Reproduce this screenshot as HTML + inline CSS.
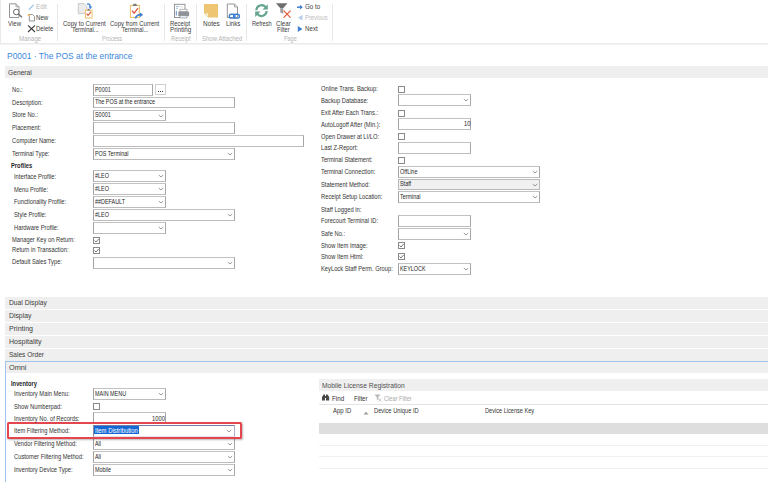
<!DOCTYPE html><html><head><meta charset="utf-8"><style>
html,body{margin:0;padding:0;background:#fff;width:768px;height:482px;overflow:hidden;position:relative}
#wrap{position:absolute;left:0;top:0;width:768px;height:482px;}
.t{position:absolute;white-space:nowrap;line-height:1;transform-origin:0 0;font-family:'Liberation Sans', sans-serif}
</style></head><body><div id="wrap">
<div style="position:absolute;left:0px;top:0px;width:1px;height:44px;background:#eaeaea"></div>
<div style="position:absolute;left:0px;top:43px;width:768px;height:1px;background:#eaeaea"></div>
<div style="position:absolute;left:0px;top:44px;width:768px;height:1px;background:#f4f4f4"></div>
<div style="position:absolute;left:57px;top:4px;width:1px;height:37px;background:#e8e8e8"></div>
<div style="position:absolute;left:164px;top:4px;width:1px;height:37px;background:#e8e8e8"></div>
<div style="position:absolute;left:196px;top:4px;width:1px;height:37px;background:#e8e8e8"></div>
<div style="position:absolute;left:246px;top:4px;width:1px;height:37px;background:#e8e8e8"></div>
<div style="position:absolute;left:332px;top:4px;width:1px;height:37px;background:#e8e8e8"></div>
<div style="position:absolute;left:5px;top:66px;width:763px;height:12px;background:#efefef"></div>
<div style="position:absolute;left:93px;top:84px;width:60px;height:12px;box-sizing:border-box;border:1px solid;border-color:#c2c2c2 #a6a6a6 #bcbcbc #a2a2a2;background:#fff"></div>
<div style="position:absolute;left:155px;top:84px;width:11px;height:11px;box-sizing:border-box;border:1px solid #cfcfcf;background:#fff"></div>
<div style="position:absolute;left:157.6px;top:91px;width:1.2px;height:1.3px;background:#333"></div>
<div style="position:absolute;left:159.8px;top:91px;width:1.2px;height:1.3px;background:#333"></div>
<div style="position:absolute;left:162.0px;top:91px;width:1.2px;height:1.3px;background:#333"></div>
<div style="position:absolute;left:93px;top:97px;width:142px;height:11px;box-sizing:border-box;border:1px solid;border-color:#c2c2c2 #a6a6a6 #bcbcbc #a2a2a2;background:#fff"></div>
<div style="position:absolute;left:93px;top:110px;width:73px;height:11px;box-sizing:border-box;border:1px solid;border-color:#c2c2c2 #a6a6a6 #bcbcbc #a2a2a2;background:#fff"></div>
<svg style="position:absolute;left:158px;top:113.5px" width="6" height="4" viewBox="0 0 6 4"><path d="M0.8 1 L3 3 L5.2 1" fill="none" stroke="#7a7a7a" stroke-width="0.75"/></svg>
<div style="position:absolute;left:93px;top:122px;width:142px;height:12px;box-sizing:border-box;border:1px solid;border-color:#c2c2c2 #a6a6a6 #bcbcbc #a2a2a2;background:#fff"></div>
<div style="position:absolute;left:93px;top:135px;width:211px;height:12px;box-sizing:border-box;border:1px solid;border-color:#c2c2c2 #a6a6a6 #bcbcbc #a2a2a2;background:#fff"></div>
<div style="position:absolute;left:93px;top:148px;width:142px;height:12px;box-sizing:border-box;border:1px solid;border-color:#c2c2c2 #a6a6a6 #bcbcbc #a2a2a2;background:#fff"></div>
<svg style="position:absolute;left:227px;top:152.0px" width="6" height="4" viewBox="0 0 6 4"><path d="M0.8 1 L3 3 L5.2 1" fill="none" stroke="#7a7a7a" stroke-width="0.75"/></svg>
<div style="position:absolute;left:93px;top:170px;width:73px;height:12px;box-sizing:border-box;border:1px solid;border-color:#c2c2c2 #a6a6a6 #bcbcbc #a2a2a2;background:#fff"></div>
<svg style="position:absolute;left:158px;top:174.0px" width="6" height="4" viewBox="0 0 6 4"><path d="M0.8 1 L3 3 L5.2 1" fill="none" stroke="#7a7a7a" stroke-width="0.75"/></svg>
<div style="position:absolute;left:93px;top:183px;width:73px;height:12px;box-sizing:border-box;border:1px solid;border-color:#c2c2c2 #a6a6a6 #bcbcbc #a2a2a2;background:#fff"></div>
<svg style="position:absolute;left:158px;top:187.0px" width="6" height="4" viewBox="0 0 6 4"><path d="M0.8 1 L3 3 L5.2 1" fill="none" stroke="#7a7a7a" stroke-width="0.75"/></svg>
<div style="position:absolute;left:93px;top:196px;width:73px;height:12px;box-sizing:border-box;border:1px solid;border-color:#c2c2c2 #a6a6a6 #bcbcbc #a2a2a2;background:#fff"></div>
<svg style="position:absolute;left:158px;top:200.0px" width="6" height="4" viewBox="0 0 6 4"><path d="M0.8 1 L3 3 L5.2 1" fill="none" stroke="#7a7a7a" stroke-width="0.75"/></svg>
<div style="position:absolute;left:93px;top:209px;width:142px;height:12px;box-sizing:border-box;border:1px solid;border-color:#c2c2c2 #a6a6a6 #bcbcbc #a2a2a2;background:#fff"></div>
<svg style="position:absolute;left:227px;top:213.0px" width="6" height="4" viewBox="0 0 6 4"><path d="M0.8 1 L3 3 L5.2 1" fill="none" stroke="#7a7a7a" stroke-width="0.75"/></svg>
<div style="position:absolute;left:93px;top:222px;width:73px;height:12px;box-sizing:border-box;border:1px solid;border-color:#c2c2c2 #a6a6a6 #bcbcbc #a2a2a2;background:#fff"></div>
<svg style="position:absolute;left:158px;top:226.0px" width="6" height="4" viewBox="0 0 6 4"><path d="M0.8 1 L3 3 L5.2 1" fill="none" stroke="#7a7a7a" stroke-width="0.75"/></svg>
<div style="position:absolute;left:93px;top:237px;width:7px;height:7px;box-sizing:border-box;border:1px solid #8a8a8a;background:#fff"></div>
<svg style="position:absolute;left:93px;top:237px" width="7" height="7" viewBox="0 0 7 7"><path d="M1.5 3.5 L3 5 L5.8 1.8" fill="none" stroke="#555" stroke-width="0.8"/></svg>
<div style="position:absolute;left:93px;top:247px;width:7px;height:7px;box-sizing:border-box;border:1px solid #8a8a8a;background:#fff"></div>
<svg style="position:absolute;left:93px;top:247px" width="7" height="7" viewBox="0 0 7 7"><path d="M1.5 3.5 L3 5 L5.8 1.8" fill="none" stroke="#555" stroke-width="0.8"/></svg>
<div style="position:absolute;left:93px;top:257px;width:142px;height:12px;box-sizing:border-box;border:1px solid;border-color:#c2c2c2 #a6a6a6 #bcbcbc #a2a2a2;background:#fff"></div>
<svg style="position:absolute;left:227px;top:261.0px" width="6" height="4" viewBox="0 0 6 4"><path d="M0.8 1 L3 3 L5.2 1" fill="none" stroke="#7a7a7a" stroke-width="0.75"/></svg>
<div style="position:absolute;left:398px;top:86px;width:7px;height:7px;box-sizing:border-box;border:1px solid #8a8a8a;background:#fff"></div>
<div style="position:absolute;left:398px;top:94px;width:73px;height:12px;box-sizing:border-box;border:1px solid;border-color:#c2c2c2 #a6a6a6 #bcbcbc #a2a2a2;background:#fff"></div>
<svg style="position:absolute;left:463px;top:98.0px" width="6" height="4" viewBox="0 0 6 4"><path d="M0.8 1 L3 3 L5.2 1" fill="none" stroke="#7a7a7a" stroke-width="0.75"/></svg>
<div style="position:absolute;left:398px;top:110px;width:7px;height:7px;box-sizing:border-box;border:1px solid #8a8a8a;background:#fff"></div>
<div style="position:absolute;left:398px;top:118px;width:73px;height:12px;box-sizing:border-box;border:1px solid;border-color:#c2c2c2 #a6a6a6 #bcbcbc #a2a2a2;background:#fff"></div>
<div style="position:absolute;left:398px;top:133px;width:7px;height:7px;box-sizing:border-box;border:1px solid #8a8a8a;background:#fff"></div>
<div style="position:absolute;left:398px;top:142px;width:73px;height:12px;box-sizing:border-box;border:1px solid;border-color:#c2c2c2 #a6a6a6 #bcbcbc #a2a2a2;background:#fff"></div>
<div style="position:absolute;left:398px;top:157px;width:7px;height:7px;box-sizing:border-box;border:1px solid #8a8a8a;background:#fff"></div>
<div style="position:absolute;left:398px;top:166px;width:142px;height:12px;box-sizing:border-box;border:1px solid;border-color:#c2c2c2 #a6a6a6 #bcbcbc #a2a2a2;background:#fff"></div>
<svg style="position:absolute;left:532px;top:170.0px" width="6" height="4" viewBox="0 0 6 4"><path d="M0.8 1 L3 3 L5.2 1" fill="none" stroke="#7a7a7a" stroke-width="0.75"/></svg>
<div style="position:absolute;left:398px;top:179px;width:142px;height:11px;box-sizing:border-box;border:1px solid #b9b9b9;background:#f0f0f0"></div>
<svg style="position:absolute;left:532px;top:182.5px" width="6" height="4" viewBox="0 0 6 4"><path d="M0.8 1 L3 3 L5.2 1" fill="none" stroke="#7a7a7a" stroke-width="0.75"/></svg>
<div style="position:absolute;left:398px;top:191px;width:142px;height:12px;box-sizing:border-box;border:1px solid;border-color:#c2c2c2 #a6a6a6 #bcbcbc #a2a2a2;background:#fff"></div>
<svg style="position:absolute;left:532px;top:195.0px" width="6" height="4" viewBox="0 0 6 4"><path d="M0.8 1 L3 3 L5.2 1" fill="none" stroke="#7a7a7a" stroke-width="0.75"/></svg>
<div style="position:absolute;left:398px;top:215px;width:73px;height:12px;box-sizing:border-box;border:1px solid;border-color:#c2c2c2 #a6a6a6 #bcbcbc #a2a2a2;background:#fff"></div>
<div style="position:absolute;left:398px;top:228px;width:73px;height:12px;box-sizing:border-box;border:1px solid;border-color:#c2c2c2 #a6a6a6 #bcbcbc #a2a2a2;background:#fff"></div>
<svg style="position:absolute;left:463px;top:232.0px" width="6" height="4" viewBox="0 0 6 4"><path d="M0.8 1 L3 3 L5.2 1" fill="none" stroke="#7a7a7a" stroke-width="0.75"/></svg>
<div style="position:absolute;left:398px;top:242px;width:7px;height:7px;box-sizing:border-box;border:1px solid #8a8a8a;background:#fff"></div>
<svg style="position:absolute;left:398px;top:242px" width="7" height="7" viewBox="0 0 7 7"><path d="M1.5 3.5 L3 5 L5.8 1.8" fill="none" stroke="#555" stroke-width="0.8"/></svg>
<div style="position:absolute;left:398px;top:253px;width:7px;height:7px;box-sizing:border-box;border:1px solid #8a8a8a;background:#fff"></div>
<svg style="position:absolute;left:398px;top:253px" width="7" height="7" viewBox="0 0 7 7"><path d="M1.5 3.5 L3 5 L5.8 1.8" fill="none" stroke="#555" stroke-width="0.8"/></svg>
<div style="position:absolute;left:398px;top:263px;width:73px;height:12px;box-sizing:border-box;border:1px solid;border-color:#c2c2c2 #a6a6a6 #bcbcbc #a2a2a2;background:#fff"></div>
<svg style="position:absolute;left:463px;top:267.0px" width="6" height="4" viewBox="0 0 6 4"><path d="M0.8 1 L3 3 L5.2 1" fill="none" stroke="#7a7a7a" stroke-width="0.75"/></svg>
<div style="position:absolute;left:5px;top:297px;width:763px;height:12px;background:#efefef"></div>
<div style="position:absolute;left:5px;top:310px;width:763px;height:12px;background:#efefef"></div>
<div style="position:absolute;left:5px;top:323px;width:763px;height:12px;background:#efefef"></div>
<div style="position:absolute;left:5px;top:336px;width:763px;height:12px;background:#efefef"></div>
<div style="position:absolute;left:5px;top:349px;width:763px;height:12px;background:#efefef"></div>
<div style="position:absolute;left:5px;top:361px;width:763px;height:1px;background:#9fc4ec"></div>
<div style="position:absolute;left:5px;top:361px;width:1px;height:121px;background:#9fc4ec"></div>
<div style="position:absolute;left:6px;top:362px;width:762px;height:11px;background:#efefef"></div>
<div style="position:absolute;left:93px;top:388px;width:73px;height:12px;box-sizing:border-box;border:1px solid;border-color:#c2c2c2 #a6a6a6 #bcbcbc #a2a2a2;background:#fff"></div>
<svg style="position:absolute;left:158px;top:392.0px" width="6" height="4" viewBox="0 0 6 4"><path d="M0.8 1 L3 3 L5.2 1" fill="none" stroke="#7a7a7a" stroke-width="0.75"/></svg>
<div style="position:absolute;left:93px;top:403px;width:7px;height:7px;box-sizing:border-box;border:1px solid #8a8a8a;background:#fff"></div>
<div style="position:absolute;left:93px;top:412px;width:73px;height:12px;box-sizing:border-box;border:1px solid;border-color:#c2c2c2 #a6a6a6 #bcbcbc #a2a2a2;background:#fff"></div>
<div style="position:absolute;left:93px;top:425px;width:142px;height:12px;box-sizing:border-box;border:1px solid;border-color:#7a7aa6 #b0b0d4 #e4e4ee #8a8a9a;background:#fff"></div>
<svg style="position:absolute;left:226px;top:429px" width="6" height="4" viewBox="0 0 6 4"><path d="M0.8 1 L3 3 L5.2 1" fill="none" stroke="#7a7a7a" stroke-width="0.75"/></svg>
<div style="position:absolute;left:94px;top:426px;width:45px;height:8px;background:#1368d6"></div>
<div style="position:absolute;left:93px;top:438px;width:142px;height:12px;box-sizing:border-box;border:1px solid;border-color:#c2c2c2 #a6a6a6 #bcbcbc #a2a2a2;background:#fff"></div>
<svg style="position:absolute;left:227px;top:442.0px" width="6" height="4" viewBox="0 0 6 4"><path d="M0.8 1 L3 3 L5.2 1" fill="none" stroke="#7a7a7a" stroke-width="0.75"/></svg>
<div style="position:absolute;left:93px;top:451px;width:142px;height:12px;box-sizing:border-box;border:1px solid;border-color:#c2c2c2 #a6a6a6 #bcbcbc #a2a2a2;background:#fff"></div>
<svg style="position:absolute;left:227px;top:455.0px" width="6" height="4" viewBox="0 0 6 4"><path d="M0.8 1 L3 3 L5.2 1" fill="none" stroke="#7a7a7a" stroke-width="0.75"/></svg>
<div style="position:absolute;left:93px;top:464px;width:142px;height:12px;box-sizing:border-box;border:1px solid;border-color:#c2c2c2 #a6a6a6 #bcbcbc #a2a2a2;background:#fff"></div>
<svg style="position:absolute;left:227px;top:468.0px" width="6" height="4" viewBox="0 0 6 4"><path d="M0.8 1 L3 3 L5.2 1" fill="none" stroke="#7a7a7a" stroke-width="0.75"/></svg>
<div style="position:absolute;left:7px;top:422px;width:235px;height:17px;box-sizing:border-box;border:2px solid #e5454d;border-radius:1.5px;box-shadow:1px 1px 2px rgba(0,0,0,.28)"></div>
<div style="position:absolute;left:319px;top:379px;width:449px;height:12px;background:#efefef"></div>
<div style="position:absolute;left:319px;top:404px;width:449px;height:1px;background:#e3e3e3"></div>
<svg style="position:absolute;left:363px;top:411px" width="6" height="4" viewBox="0 0 6 4"><path d="M0.5 3.5 L3 0.8 L5.5 3.5Z" fill="#9a9a9a"/></svg>
<div style="position:absolute;left:319px;top:423px;width:449px;height:11px;background:#dedede"></div>
<div style="position:absolute;left:319px;top:445px;width:449px;height:1px;background:#f1f1f1"></div>
<div style="position:absolute;left:319px;top:456px;width:449px;height:1px;background:#f1f1f1"></div>
<div style="position:absolute;left:319px;top:468px;width:449px;height:1px;background:#f1f1f1"></div>

<svg style="position:absolute;left:0;top:0" width="360" height="44" viewBox="0 0 360 44">
 <!-- View -->
 <path d="M9.5 3.8 H16 L19 6.8 V17.5 H9.5 Z" fill="#fff" stroke="#8a8a8a" stroke-width="0.9"/>
 <path d="M16 3.8 V6.8 H19" fill="none" stroke="#8a8a8a" stroke-width="0.7"/>
 <circle cx="16.3" cy="12" r="2.8" fill="#fff" stroke="#6a6a6a" stroke-width="1"/>
 <path d="M18.3 14 L22 17.3" stroke="#6a6a6a" stroke-width="1.3"/>
 <!-- Edit pencil -->
 <path d="M28.8 9.8 L33.8 4.8" stroke="#a9c6ea" stroke-width="1.3"/>
 <!-- New -->
 <path d="M29.3 14.5 H32.5 L34.5 16.5 V21 H29.3 Z" fill="#fff" stroke="#7a7a7a" stroke-width="0.8"/>
 <circle cx="28.8" cy="15" r="1.1" fill="#f3b94a"/>
 <!-- Delete -->
 <path d="M28 25.3 L35 32 M35 25.3 L28 32" stroke="#3d3d3d" stroke-width="1.1"/>
 <!-- Copy to current -->
 <path d="M78.3 3.6 H84 L86.8 6.4 V13.6 H78.3 Z" fill="#ececec" stroke="#c4c4c4" stroke-width="0.9"/>
 <rect x="85.4" y="10.2" width="6.6" height="7.8" fill="#fff" stroke="#eec570" stroke-width="1.1"/>
 <path d="M86.6 13.6 L88.1 15.4 L90.9 11.8" fill="none" stroke="#dc5a40" stroke-width="1.2"/>
 <path d="M87.2 10.4 L88 8.8 H89.4 L90.2 10.4 Z" fill="#7c7c7c"/>
 <path d="M87 4.2 Q89.8 3.2 90.3 6.6" fill="none" stroke="#3f80d2" stroke-width="1.4"/>
 <path d="M88.6 6.2 L92.2 6.4 L90.2 9.2 Z" fill="#3f80d2"/>
 <!-- Copy from current -->
 <rect x="130.4" y="5.4" width="9" height="12" fill="#fff" stroke="#eec570" stroke-width="1.1"/>
 <path d="M132.6 6 L133.6 3.8 H136.2 L137.2 6 Z" fill="#7a7a7a"/>
 <path d="M132 10.8 L134.2 13.2 L138 8.2" fill="none" stroke="#dc5a40" stroke-width="1.3"/>
 <path d="M135.3 18.6 Q136.6 14.6 140.6 14.6" fill="none" stroke="#3f80d2" stroke-width="1.7"/>
 <path d="M140 12.4 L143.2 14.8 L140 17.2 Z" fill="#3f80d2"/>
 <!-- Receipt printing -->
 <rect x="174.5" y="4.3" width="10.5" height="13.2" fill="#fff" stroke="#8c8c8c" stroke-width="0.9"/>
 <path d="M176 6.5 H179 M176 8.3 H178" stroke="#8fb0d8" stroke-width="0.8"/>
 <path d="M180 6.8 H183" stroke="#bbb" stroke-width="0.5"/>
 <rect x="175.8" y="11" width="1" height="4.5" fill="#5b8fd6"/>
 <rect x="180" y="9.2" width="7" height="2.6" fill="#fff" stroke="#8a8a8a" stroke-width="0.6"/>
 <rect x="178.3" y="11.6" width="10.8" height="4.6" rx="0.8" fill="#8e9399"/>
 <rect x="180" y="15.6" width="7" height="2.4" fill="#e4ecf6" stroke="#8a8a8a" stroke-width="0.6"/>
 <!-- Notes -->
 <path d="M204 4 H218 V17.5 H208.5 L204 13 Z" fill="#eec572"/>
 <path d="M204 13 H208.5 V17.5 Z" fill="#fbefd2" stroke="#e4bd6a" stroke-width="0.5"/>
 <!-- Links -->
 <path d="M227.3 4 H234.5 L237.5 7 V17.5 H227.3 Z" fill="#fff" stroke="#8a8a8a" stroke-width="0.9"/>
 <path d="M234.5 4 V7 H237.5" fill="none" stroke="#8a8a8a" stroke-width="0.7"/>
 <rect x="229.3" y="14.3" width="5.6" height="3.8" rx="1.9" fill="none" stroke="#3c7ed3" stroke-width="1.4"/>
 <rect x="233.6" y="14.3" width="5.8" height="3.8" rx="1.9" fill="none" stroke="#3c7ed3" stroke-width="1.4"/>
 <!-- Refresh -->
 <path d="M256.3 10.2 A5.2 5.2 0 0 1 265.6 7.2" fill="none" stroke="#62a48c" stroke-width="2.1"/>
 <path d="M267.8 4.2 L267.8 9.6 L262.6 9.6 Z" fill="#62a48c"/>
 <path d="M266.7 11 A5.2 5.2 0 0 1 257.4 14" fill="none" stroke="#62a48c" stroke-width="2.1"/>
 <path d="M255.2 17 L255.2 11.6 L260.4 11.6 Z" fill="#62a48c"/>
 <!-- Clear filter -->
 <path d="M276 3.2 H287.5 L283.2 8.2 H280.3 Z" fill="#6e6e6e"/>
 <path d="M280.3 8.2 H283.2 V13.8 L280.3 12.6 Z" fill="#9c9c9c"/>
 <path d="M283.6 10.6 L290.6 17.6 M290.6 10.6 L283.6 17.6" stroke="#e5603f" stroke-width="1.3"/>
 <!-- Go to -->
 <path d="M297 7.2 H301.5" stroke="#4a88d2" stroke-width="1.6"/>
 <path d="M300 4.8 L302.8 7.2 L300 9.6 Z" fill="#3f7fd0"/>
 <!-- Previous -->
 <path d="M302.5 14.8 L298 17.7 L302.5 20.6 Z" fill="#b5cdea"/>
 <!-- Next -->
 <path d="M297.8 26 L302.5 29 L297.8 32 Z" fill="#3f7fd0"/>
</svg>

<svg style="position:absolute;left:320px;top:393px" width="64" height="10" viewBox="320 393 64 10">
 <path d="M322 400.5 V397 L323.5 394.5 H325 V400.5 Z M326 400.5 V394.5 H327.5 L329.2 397 V400.5 Z" fill="#4a4a4a"/>
 <rect x="324.6" y="396" width="1.8" height="2" fill="#4a4a4a"/>
 <path d="M374.5 394.5 H380.5 L378.3 397.3 V400 L376.8 399.4 V397.3 Z" fill="#b9b9b9"/>
 <path d="M378.5 398.5 L381.5 401.5 M381.5 398.5 L378.5 401.5" stroke="#c0c0c0" stroke-width="0.8"/>
</svg>
<div class="t" style="left:8.44px;top:19.87px;font-size:7px;color:#3c3c3c;transform:scaleX(0.8658)">View</div>
<div class="t" style="left:35.63px;top:3.27px;font-size:7px;color:#b8b8b8;transform:scaleX(0.8911)">Edit</div>
<div class="t" style="left:36.13px;top:13.87px;font-size:7px;color:#3c3c3c;transform:scaleX(0.8728)">New</div>
<div class="t" style="left:36.14px;top:24.87px;font-size:7px;color:#3c3c3c;transform:scaleX(0.8508)">Delete</div>
<div class="t" style="left:18.63px;top:35.07px;font-size:7px;color:#b4b4b4;transform:scaleX(0.8791)">Manage</div>
<div class="t" style="left:63.14px;top:20.07px;font-size:7px;color:#3c3c3c;transform:scaleX(0.8645)">Copy to Current</div>
<div class="t" style="left:71.65px;top:26.07px;font-size:7px;color:#3c3c3c;transform:scaleX(0.8265)">Terminal...</div>
<div class="t" style="left:110.14px;top:20.07px;font-size:7px;color:#3c3c3c;transform:scaleX(0.8548)">Copy from Current</div>
<div class="t" style="left:122.16px;top:26.07px;font-size:7px;color:#3c3c3c;transform:scaleX(0.8106)">Terminal...</div>
<div class="t" style="left:101.67px;top:35.07px;font-size:7px;color:#b4b4b4;transform:scaleX(0.7973)">Process</div>
<div class="t" style="left:170.14px;top:20.07px;font-size:7px;color:#3c3c3c;transform:scaleX(0.8517)">Receipt</div>
<div class="t" style="left:170.12px;top:26.07px;font-size:7px;color:#3c3c3c;transform:scaleX(0.8954)">Printing</div>
<div class="t" style="left:170.65px;top:35.07px;font-size:7px;color:#b4b4b4;transform:scaleX(0.8299)">Receipt</div>
<div class="t" style="left:202.62px;top:20.07px;font-size:7px;color:#3c3c3c;transform:scaleX(0.9165)">Notes</div>
<div class="t" style="left:225.63px;top:20.07px;font-size:7px;color:#3c3c3c;transform:scaleX(0.8708)">Links</div>
<div class="t" style="left:201.64px;top:35.07px;font-size:7px;color:#b4b4b4;transform:scaleX(0.8613)">Show Attached</div>
<div class="t" style="left:251.66px;top:20.07px;font-size:7px;color:#3c3c3c;transform:scaleX(0.8025)">Refresh</div>
<div class="t" style="left:275.63px;top:20.07px;font-size:7px;color:#3c3c3c;transform:scaleX(0.8808)">Clear</div>
<div class="t" style="left:276.66px;top:26.07px;font-size:7px;color:#3c3c3c;transform:scaleX(0.8151)">Filter</div>
<div class="t" style="left:304.63px;top:3.07px;font-size:7px;color:#3c3c3c;transform:scaleX(0.8904)">Go to</div>
<div class="t" style="left:304.65px;top:14.07px;font-size:7px;color:#bdbdbd;transform:scaleX(0.8335)">Previous</div>
<div class="t" style="left:304.63px;top:24.57px;font-size:7px;color:#3c3c3c;transform:scaleX(0.8845)">Next</div>
<div class="t" style="left:283.68px;top:35.07px;font-size:7px;color:#b4b4b4;transform:scaleX(0.7732)">Page</div>
<div class="t" style="left:7.29px;top:51.61px;font-size:9.2px;color:#3a88da;transform:scaleX(0.9215)">P0001 · The POS at the entrance</div>
<div class="t" style="left:8.40px;top:68.65px;font-size:7.5px;color:#3c3c3c;transform:scaleX(0.8919)">General</div>
<div class="t" style="left:11.95px;top:86.07px;font-size:7px;color:#333333;transform:scaleX(0.8250)">No.:</div>
<div class="t" style="left:11.95px;top:98.82px;font-size:7px;color:#333333;transform:scaleX(0.8250)">Description:</div>
<div class="t" style="left:11.95px;top:111.32px;font-size:7px;color:#333333;transform:scaleX(0.8250)">Store No.:</div>
<div class="t" style="left:11.95px;top:124.07px;font-size:7px;color:#333333;transform:scaleX(0.8250)">Placement:</div>
<div class="t" style="left:11.95px;top:136.82px;font-size:7px;color:#333333;transform:scaleX(0.8250)">Computer Name:</div>
<div class="t" style="left:11.95px;top:149.57px;font-size:7px;color:#333333;transform:scaleX(0.8250)">Terminal Type:</div>
<div class="t" style="left:11.15px;top:162.07px;font-size:7px;color:#262626;transform:scaleX(0.8250);font-weight:bold">Profiles</div>
<div class="t" style="left:13.95px;top:172.57px;font-size:7px;color:#333333;transform:scaleX(0.8250)">Interface Profile:</div>
<div class="t" style="left:13.95px;top:185.57px;font-size:7px;color:#333333;transform:scaleX(0.8250)">Menu Profile:</div>
<div class="t" style="left:13.95px;top:198.07px;font-size:7px;color:#333333;transform:scaleX(0.8250)">Functionality Profile:</div>
<div class="t" style="left:13.95px;top:211.07px;font-size:7px;color:#333333;transform:scaleX(0.8250)">Style Profile:</div>
<div class="t" style="left:13.95px;top:224.07px;font-size:7px;color:#333333;transform:scaleX(0.8250)">Hardware Profile:</div>
<div class="t" style="left:11.95px;top:235.97px;font-size:7px;color:#333333;transform:scaleX(0.8250)">Manager Key on Return:</div>
<div class="t" style="left:11.95px;top:246.47px;font-size:7px;color:#333333;transform:scaleX(0.8250)">Return in Transaction:</div>
<div class="t" style="left:11.95px;top:258.27px;font-size:7px;color:#333333;transform:scaleX(0.8250)">Default Sales Type:</div>
<div class="t" style="left:95.27px;top:85.67px;font-size:7px;color:#262626;transform:scaleX(0.7750)">P0001</div>
<div class="t" style="left:95.27px;top:97.67px;font-size:7px;color:#262626;transform:scaleX(0.7750)">The POS at the entrance</div>
<div class="t" style="left:95.27px;top:110.67px;font-size:7px;color:#262626;transform:scaleX(0.7750)">S0001</div>
<div class="t" style="left:95.27px;top:149.67px;font-size:7px;color:#262626;transform:scaleX(0.7750)">POS Terminal</div>
<div class="t" style="left:95.27px;top:171.67px;font-size:7px;color:#262626;transform:scaleX(0.7750)">#LEO</div>
<div class="t" style="left:95.27px;top:184.67px;font-size:7px;color:#262626;transform:scaleX(0.7750)">#LEO</div>
<div class="t" style="left:95.27px;top:197.67px;font-size:7px;color:#262626;transform:scaleX(0.7750)">##DEFAULT</div>
<div class="t" style="left:95.27px;top:210.67px;font-size:7px;color:#262626;transform:scaleX(0.7750)">#LEO</div>
<div class="t" style="left:320.85px;top:85.07px;font-size:7px;color:#333333;transform:scaleX(0.8250)">Online Trans. Backup:</div>
<div class="t" style="left:320.85px;top:96.57px;font-size:7px;color:#333333;transform:scaleX(0.8250)">Backup Database:</div>
<div class="t" style="left:320.85px;top:109.07px;font-size:7px;color:#333333;transform:scaleX(0.8250)">Exit After Each Trans.:</div>
<div class="t" style="left:320.85px;top:120.57px;font-size:7px;color:#333333;transform:scaleX(0.8250)">AutoLogoff After (Min.):</div>
<div class="t" style="left:320.85px;top:132.57px;font-size:7px;color:#333333;transform:scaleX(0.8250)">Open Drawer at LI/LO:</div>
<div class="t" style="left:320.85px;top:144.07px;font-size:7px;color:#333333;transform:scaleX(0.8250)">Last Z-Report:</div>
<div class="t" style="left:320.85px;top:156.07px;font-size:7px;color:#333333;transform:scaleX(0.8250)">Terminal Statement:</div>
<div class="t" style="left:320.85px;top:168.07px;font-size:7px;color:#333333;transform:scaleX(0.8250)">Terminal Connection:</div>
<div class="t" style="left:320.85px;top:180.57px;font-size:7px;color:#333333;transform:scaleX(0.8250)">Statement Method:</div>
<div class="t" style="left:320.85px;top:193.07px;font-size:7px;color:#333333;transform:scaleX(0.8250)">Receipt Setup Location:</div>
<div class="t" style="left:320.85px;top:205.57px;font-size:7px;color:#333333;transform:scaleX(0.8250)">Staff Logged in:</div>
<div class="t" style="left:320.85px;top:217.07px;font-size:7px;color:#333333;transform:scaleX(0.8250)">Forecourt Terminal ID:</div>
<div class="t" style="left:320.85px;top:230.07px;font-size:7px;color:#333333;transform:scaleX(0.8250)">Safe No.:</div>
<div class="t" style="left:320.85px;top:242.07px;font-size:7px;color:#333333;transform:scaleX(0.8250)">Show Item Image:</div>
<div class="t" style="left:320.85px;top:253.07px;font-size:7px;color:#333333;transform:scaleX(0.8250)">Show Item Html:</div>
<div class="t" style="left:320.85px;top:264.57px;font-size:7px;color:#333333;transform:scaleX(0.8250)">KeyLock Staff Perm. Group:</div>
<div class="t" style="left:463.85px;top:120.37px;font-size:7px;color:#262626;transform:scaleX(0.8250)">10</div>
<div class="t" style="left:400.27px;top:167.67px;font-size:7px;color:#262626;transform:scaleX(0.7750)">OffLine</div>
<div class="t" style="left:400.27px;top:179.67px;font-size:7px;color:#262626;transform:scaleX(0.7750)">Staff</div>
<div class="t" style="left:400.27px;top:192.67px;font-size:7px;color:#262626;transform:scaleX(0.7750)">Terminal</div>
<div class="t" style="left:400.27px;top:264.67px;font-size:7px;color:#262626;transform:scaleX(0.7750)">KEYLOCK</div>
<div class="t" style="left:8.60px;top:299.45px;font-size:7.5px;color:#3c3c3c;transform:scaleX(0.8979)">Dual Display</div>
<div class="t" style="left:8.59px;top:312.30px;font-size:7.5px;color:#3c3c3c;transform:scaleX(0.9116)">Display</div>
<div class="t" style="left:8.57px;top:325.15px;font-size:7.5px;color:#3c3c3c;transform:scaleX(0.9455)">Printing</div>
<div class="t" style="left:8.58px;top:338.00px;font-size:7.5px;color:#3c3c3c;transform:scaleX(0.9404)">Hospitality</div>
<div class="t" style="left:8.61px;top:350.85px;font-size:7.5px;color:#3c3c3c;transform:scaleX(0.8740)">Sales Order</div>
<div class="t" style="left:8.56px;top:363.85px;font-size:7.5px;color:#3c3c3c;transform:scaleX(0.9752)">Omni</div>
<div class="t" style="left:11.15px;top:379.87px;font-size:7px;color:#262626;transform:scaleX(0.8250);font-weight:bold">Inventory</div>
<div class="t" style="left:13.95px;top:390.07px;font-size:7px;color:#333333;transform:scaleX(0.8250)">Inventory Main Menu:</div>
<div class="t" style="left:13.95px;top:402.57px;font-size:7px;color:#333333;transform:scaleX(0.8250)">Show Numberpad:</div>
<div class="t" style="left:13.95px;top:414.57px;font-size:7px;color:#333333;transform:scaleX(0.8250)">Inventory No. of Records:</div>
<div class="t" style="left:13.95px;top:427.07px;font-size:7px;color:#333333;transform:scaleX(0.8250)">Item Filtering Method:</div>
<div class="t" style="left:13.95px;top:439.57px;font-size:7px;color:#333333;transform:scaleX(0.8250)">Vendor Filtering Method:</div>
<div class="t" style="left:13.95px;top:452.57px;font-size:7px;color:#333333;transform:scaleX(0.8250)">Customer Filtering Method:</div>
<div class="t" style="left:13.95px;top:465.57px;font-size:7px;color:#333333;transform:scaleX(0.8250)">Inventory Device Type:</div>
<div class="t" style="left:95.27px;top:389.67px;font-size:7px;color:#262626;transform:scaleX(0.7750)">MAIN MENU</div>
<div class="t" style="left:152.15px;top:414.57px;font-size:7px;color:#262626;transform:scaleX(0.8250)">1000</div>
<div class="t" style="left:94.65px;top:427.07px;font-size:7px;color:#fff;transform:scaleX(0.8444)">Item Distribution</div>
<div class="t" style="left:95.27px;top:439.67px;font-size:7px;color:#262626;transform:scaleX(0.7750)">All</div>
<div class="t" style="left:95.27px;top:452.67px;font-size:7px;color:#262626;transform:scaleX(0.7750)">All</div>
<div class="t" style="left:95.27px;top:465.67px;font-size:7px;color:#262626;transform:scaleX(0.7750)">Mobile</div>
<div class="t" style="left:322.20px;top:381.97px;font-size:7px;color:#505050;transform:scaleX(0.9629)">Mobile License Registration</div>
<div class="t" style="left:332.22px;top:394.82px;font-size:7px;color:#333;transform:scaleX(0.8995)">Find</div>
<div class="t" style="left:354.43px;top:394.82px;font-size:7px;color:#333;transform:scaleX(0.8694)">Filter</div>
<div class="t" style="left:383.96px;top:394.82px;font-size:7px;color:#a8a8a8;transform:scaleX(0.8085)">Clear Filter</div>
<div class="t" style="left:332.64px;top:406.97px;font-size:7px;color:#333;transform:scaleX(0.8509)">App ID</div>
<div class="t" style="left:374.16px;top:406.97px;font-size:7px;color:#333;transform:scaleX(0.8205)">Device Unique ID</div>
<div class="t" style="left:484.66px;top:406.97px;font-size:7px;color:#333;transform:scaleX(0.7997)">Device License Key</div>
</div></body></html>
